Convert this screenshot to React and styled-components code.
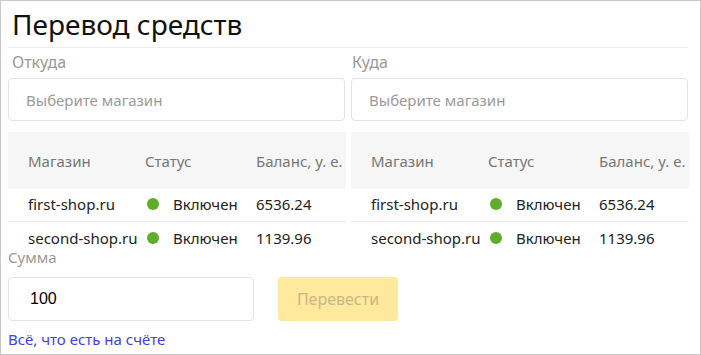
import React from "react";
import styled, { createGlobalStyle } from "styled-components";

const GlobalStyle = createGlobalStyle`
  * { box-sizing: border-box; }
  body {
    margin: 0;
    background: #fff;
    font-family: "Noto Sans", "Open Sans", sans-serif;
    color: #222;
  }
`;

const shops = [
  { name: "first-shop.ru", status: "Включен", balance: "6536.24" },
  { name: "second-shop.ru", status: "Включен", balance: "1139.96" },
];

const ShopTable = () => (
  <Table>
    <HeadRow>
      <span>Магазин</span>
      <span>Статус</span>
      <span>Баланс, у. е.</span>
    </HeadRow>
    {shops.map((shop, i) => (
      <Row key={shop.name} last={i === shops.length - 1}>
        <span>{shop.name}</span>
        <Status>
          <Dot />
          {shop.status}
        </Status>
        <span>{shop.balance}</span>
      </Row>
    ))}
  </Table>
);

const App = () => {
  return (
    <>
      <GlobalStyle />
      <Frame>
        <Header>
          <Title>Перевод средств</Title>
        </Header>
        <Columns>
          <Column>
            <Label indent={4}>Откуда</Label>
            <Input placeholder="Выберите магазин" />
            <ShopTable />
          </Column>
          <Column>
            <Label indent={1}>Куда</Label>
            <Input placeholder="Выберите магазин" />
            <ShopTable />
          </Column>
        </Columns>
        <AmountLabel>Сумма</AmountLabel>
        <AmountRow>
          <AmountInput defaultValue="100" />
          <SendBtn disabled>Перевести</SendBtn>
        </AmountRow>
        <AllLink href="#">Всё, что есть на счёте</AllLink>
      </Frame>
    </>
  );
};

const Frame = styled.div`
  width: 701px;
  height: 355px;
  border: 1px solid #c9c9c9;
  padding: 0 12px 0 7px;
  overflow: hidden;
`;

const Header = styled.header`
  height: 47px;
  border-bottom: 1px solid #ececec;
`;

const Title = styled.h1`
  margin: 0;
  padding-left: 4px;
  font-size: 28px;
  font-weight: 400;
  line-height: 46px;
  color: #111;
`;

const Columns = styled.div`
  display: grid;
  grid-template-columns: 337px 337px;
  column-gap: 6px;
`;

const Column = styled.div`
  display: flex;
  flex-direction: column;
`;

const Label = styled.label`
  margin: 4px 0 6px;
  padding-left: ${(p) => p.indent}px;
  font-size: 16px;
  line-height: 20px;
  color: #999;
`;

const Input = styled.input`
  height: 43px;
  width: 100%;
  border: 1px solid #e3e3e3;
  border-radius: 4px;
  padding: 0 17px;
  font-family: inherit;
  font-size: 15px;
  color: #222;
  outline: none;
  &::placeholder {
    color: #9a9a9a;
  }
`;

const Table = styled.div`
  margin-top: 11px;
  width: 338px;
`;

const Cells = styled.div`
  display: grid;
  grid-template-columns: 117px 111px 1fr;
  align-items: center;
  padding-left: 20px;
  font-size: 15px;
  white-space: nowrap;
`;

const HeadRow = styled(Cells)`
  height: 57px;
  background: #f6f6f6;
  color: #777;
`;

const Row = styled(Cells)`
  height: 33px;
  padding-bottom: 2px;
  color: #222;
  border-bottom: ${(p) => (p.last ? "none" : "1px solid #ececec")};
`;

const Status = styled.span`
  display: flex;
  align-items: center;
`;

const Dot = styled.i`
  width: 12px;
  height: 12px;
  border-radius: 50%;
  background: #5fae2a;
  margin: 0 14px 0 2px;
`;

const AmountLabel = styled.div`
  margin: -6px 0 12px;
  font-size: 15px;
  line-height: 16px;
  color: #999;
`;

const AmountRow = styled.div`
  display: flex;
  align-items: center;
  gap: 24px;
`;

const AmountInput = styled(Input)`
  width: 246px;
  height: 44px;
  padding: 0 21px;
  font-family: "Liberation Sans", Arial, sans-serif;
  font-size: 16px;
  color: #000;
`;

const SendBtn = styled.button`
  width: 120px;
  height: 44px;
  border: none;
  border-radius: 4px;
  background: #ffe99c;
  color: #c7b789;
  font-family: inherit;
  font-size: 16px;
`;

const AllLink = styled.a`
  display: block;
  margin-top: 10px;
  font-size: 15px;
  line-height: 16px;
  color: #4141de;
  text-decoration: none;
`;

export default App;
